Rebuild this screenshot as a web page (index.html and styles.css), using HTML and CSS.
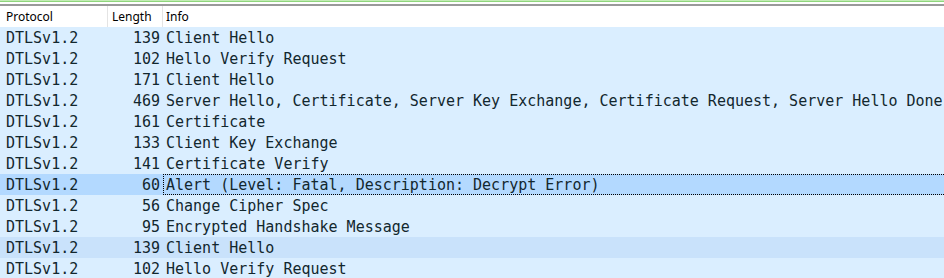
FILE: index.html
```html
<!DOCTYPE html>
<html lang="en">
<head>
  <meta charset="UTF-8" />
  <title>Packet list</title>
<link rel="stylesheet" href="styles.css">
</head>
<body>
<div class="topbar"></div>
<div class="packets">
  <div class="head">
    <div class="hcell">Protocol</div>
    <div class="hcell">Length</div>
    <div class="hcell">Info</div>
  </div>
  <div class="row"><div class="proto">DTLSv1.2</div><div class="len">139</div><div class="info">Client Hello</div></div>
  <div class="row"><div class="proto">DTLSv1.2</div><div class="len">102</div><div class="info">Hello Verify Request</div></div>
  <div class="row"><div class="proto">DTLSv1.2</div><div class="len">171</div><div class="info">Client Hello</div></div>
  <div class="row"><div class="proto">DTLSv1.2</div><div class="len">469</div><div class="info">Server Hello, Certificate, Server Key Exchange, Certificate Request, Server Hello Done</div></div>
  <div class="row"><div class="proto">DTLSv1.2</div><div class="len">161</div><div class="info">Certificate</div></div>
  <div class="row"><div class="proto">DTLSv1.2</div><div class="len">133</div><div class="info">Client Key Exchange</div></div>
  <div class="row"><div class="proto">DTLSv1.2</div><div class="len">141</div><div class="info">Certificate Verify</div></div>
  <div class="row selected"><div class="proto">DTLSv1.2</div><div class="len">60</div><div class="info focus">Alert (Level: Fatal, Description: Decrypt Error)</div></div>
  <div class="row"><div class="proto">DTLSv1.2</div><div class="len">56</div><div class="info">Change Cipher Spec</div></div>
  <div class="row"><div class="proto">DTLSv1.2</div><div class="len">95</div><div class="info">Encrypted Handshake Message</div></div>
  <div class="row hover"><div class="proto">DTLSv1.2</div><div class="len">139</div><div class="info">Client Hello</div></div>
  <div class="row"><div class="proto">DTLSv1.2</div><div class="len">102</div><div class="info">Hello Verify Request</div></div>
</div>
</body>
</html>
```
FILE: styles.css
```css
body {
  margin: 0;
  background: #fff;
  overflow: hidden;
}

.topbar {
  height: 1px;
  border-top: 1px solid #c4ecb6;
  background: #8fd67c;
  border-bottom: 2px solid #fff;
  box-shadow: 0 3px 0 #9a9a9a, 0 4px 0 #d0d0d0;
  margin-bottom: 2px;
}

.packets {
  width: 944px;
  overflow: hidden;
}

.head,
.row {
  display: grid;
  grid-template-columns: 108px 55px 1fr;
  white-space: nowrap;
}

.head {
  height: 21px;
  font-family: "Noto Sans", "Open Sans", sans-serif;
  font-size: 12px;
  color: #000;
  background: #fff;
}

.hcell {
  line-height: 21px;
  padding-left: 4px;
  border-right: 1px solid #e4e4e4;
}

.hcell:first-child {
  padding-left: 6px;
}

.hcell:last-child {
  border-right: none;
  padding-left: 3px;
}

.row {
  height: 21px;
  background: #daeeff;
  color: #12272e;
  font-family: "DejaVu Sans Mono", "Liberation Mono", monospace;
  font-size: 15px;
  line-height: 20px;
}

.row > div {
  padding-top: 1px;
}

.row.selected {
  background: #b3d9ff;
}

.row.hover {
  background: #c9e2fb;
}

.proto {
  padding-left: 6px;
}

.len {
  text-align: right;
  padding-right: 3px;
}

.info {
  padding-left: 3px;
  overflow: hidden;
}

.info.focus {
  outline: 1px dotted #000;
  outline-offset: -1px;
  margin-right: -4px;
}
```
